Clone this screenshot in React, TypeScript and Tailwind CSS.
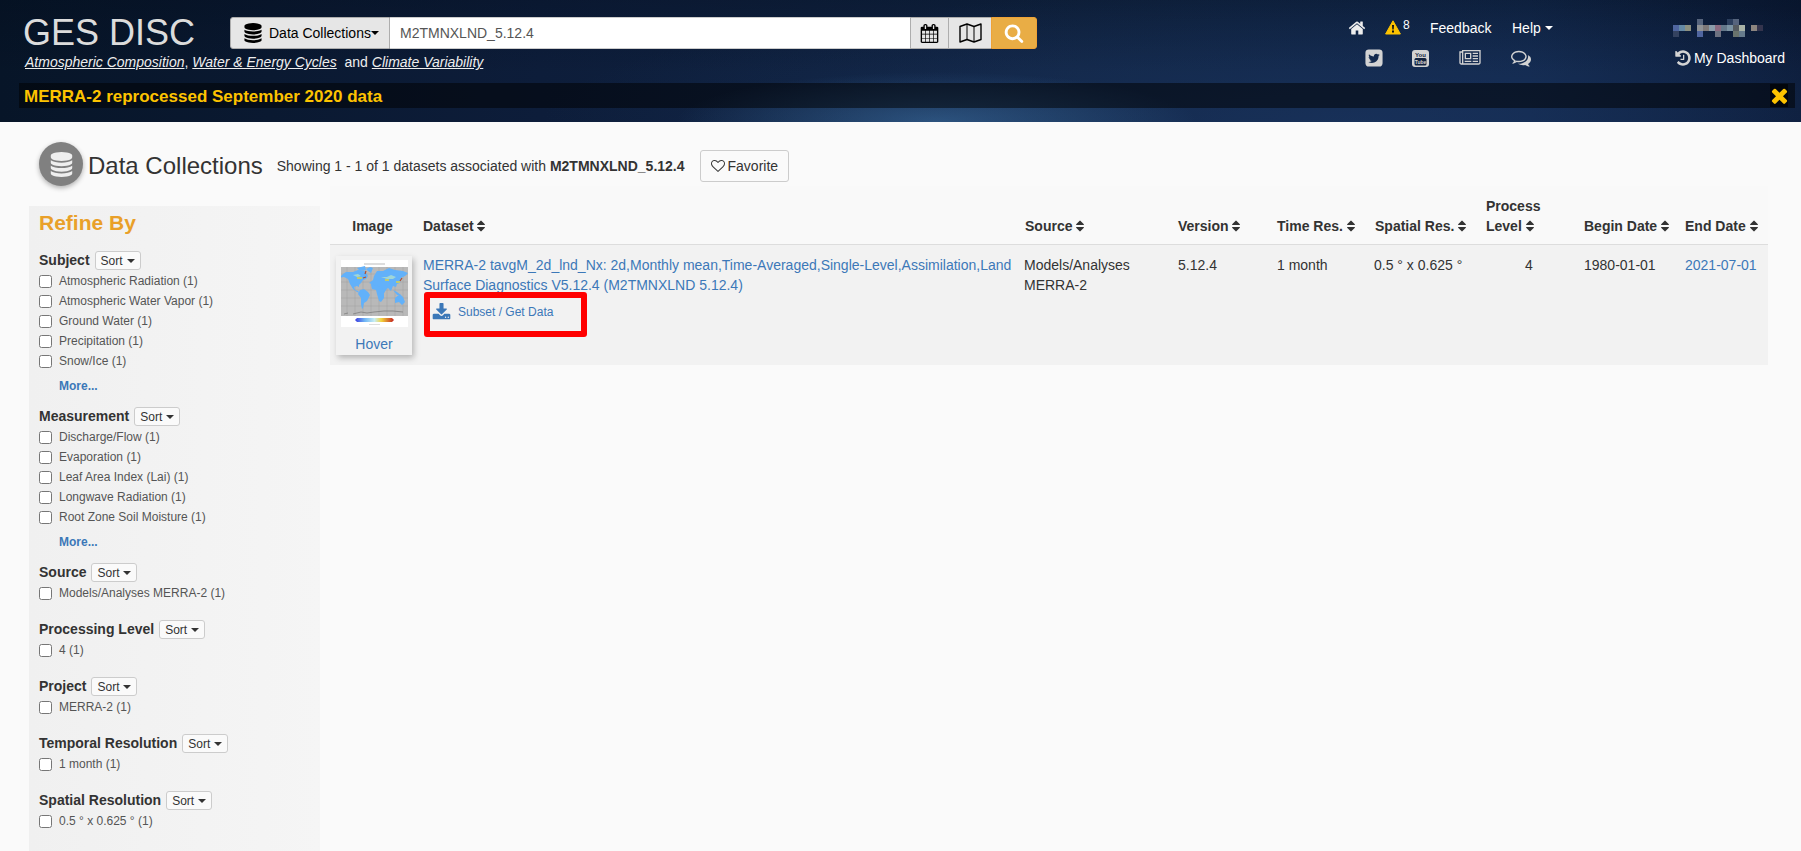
import { useState } from 'react'
import type { ReactNode } from 'react'

const icons = {
  database:
    'M896 768q237 0 443-43t325-127v170q0 69-103 128t-280 93.5-385 34.5-385-34.5-280-93.5-103-128v-170q119 84 325 127t443 43zm0 768q237 0 443-43t325-127v170q0 69-103 128t-280 93.5-385 34.5-385-34.5-280-93.5-103-128v-170q119 84 325 127t443 43zm0-384q237 0 443-43t325-127v170q0 69-103 128t-280 93.5-385 34.5-385-34.5-280-93.5-103-128v-170q119 84 325 127t443 43zm0-1152q208 0 385 34.5t280 93.5 103 128v128q0 69-103 128t-280 93.5-385 34.5-385-34.5-280-93.5-103-128v-128q0-69 103-128t280-93.5 385-34.5z',
  home: 'M1472 992v480q0 26-19 45t-45 19h-384v-384h-256v384h-384q-26 0-45-19t-19-45v-480q0-1 .5-3t.5-3l575-474 575 474q1 2 1 6zm223-69l-62 74q-8 9-21 11h-3q-13 0-21-7l-692-577-692 577q-12 8-24 7-13-2-21-11l-62-74q-8-10-7-23.5t11-21.5l719-599q32-26 76-26t76 26l244 204v-195q0-14 9-23t23-9h192q14 0 23 9t9 23v408l219 182q10 8 11 21.5t-7 23.5z',
  search:
    'M1216 832q0-185-131.5-316.5t-316.5-131.5-316.5 131.5-131.5 316.5 131.5 316.5 316.5 131.5 316.5-131.5 131.5-316.5zm512 832q0 52-38 90t-90 38q-54 0-90-38l-343-342q-179 124-399 124-143 0-273.5-55.5t-225-150-150-225-55.5-273.5 55.5-273.5 150-225 225-150 273.5-55.5 273.5 55.5 225 150 150 225 55.5 273.5q0 220-124 399l343 343q37 37 37 90z',
  calendar:
    'M192 1664h288v-288h-288v288zm352 0h320v-288h-320v288zm-352-352h288v-320h-288v320zm352 0h320v-320h-320v320zm-352-384h288v-288h-288v288zm736 736h320v-288h-320v288zm-384-736h320v-288h-320v288zm768 736h288v-288h-288v288zm-384-352h320v-320h-320v320zm-352-864v-288q0-13-9.5-22.5t-22.5-9.5h-64q-13 0-22.5 9.5t-9.5 22.5v288q0 13 9.5 22.5t22.5 9.5h64q13 0 22.5-9.5t9.5-22.5zm736 864h288v-320h-288v320zm-384-384h320v-288h-320v288zm384 0h288v-288h-288v288zm32-480v-288q0-13-9.5-22.5t-22.5-9.5h-64q-13 0-22.5 9.5t-9.5 22.5v288q0 13 9.5 22.5t22.5 9.5h64q13 0 22.5-9.5t9.5-22.5zm384-64v1280q0 52-38 90t-90 38h-1408q-52 0-90-38t-38-90v-1280q0-52 38-90t90-38h128v-96q0-66 47-113t113-47h64q66 0 113 47t47 113v96h384v-96q0-66 47-113t113-47h64q66 0 113 47t47 113v96h128q52 0 90 38t38 90z',
  comments:
    'M704 384q-153 0-286 52t-211.5 141-78.5 191q0 82 53 158t149 132l97 56-35 84q34-20 62-39l44-31 53 10q78 14 153 14 153 0 286-52t211.5-141 78.5-191-78.5-191-211.5-141-286-52zm0-128q191 0 353.5 68.5t256.5 186.5 94 257-94 257-256.5 186.5-353.5 68.5q-86 0-176-16-124 88-278 128-36 9-86 16h-3q-11 0-20.5-8t-11.5-21q-1-3-1-6.5t.5-6.5 2-6l2.5-5 3.5-5.5 4-5 4.5-5 4-4.5q5-6 23-25t26-29.5 22.5-29 25-38.5 20.5-44q-124-72-195-177t-71-224q0-139 94-257t256.5-186.5 353.5-68.5zm822 1169q10 24 20.5 44t25 38.5 22.5 29 26 29.5 23 25q1 1 4 4.5t4.5 5 4 5 3.5 5.5l2.5 5 2 6 .5 6.5-1 6.5q-3 14-13 22t-22 7q-50-7-86-16-154-40-278-128-90 16-176 16-271 0-472-132 58 4 88 4 161 0 309-45t264-129q125-92 192-212t67-254q0-77-23-152 129 71 204 178t75 230q0 120-71 224.5t-195 176.5z',
  history:
    'M1664 896q0 156-61 298t-164 245-245 164-298 61q-172 0-327-72.5t-264-204.5q-7-10-6.5-22.5t8.5-20.5l137-138q10-9 25-9 16 2 23 12 73 95 179 147t225 52q104 0 198.5-40.5t163.5-109.5 109.5-163.5 40.5-198.5-40.5-198.5-109.5-163.5-163.5-109.5-198.5-40.5q-98 0-188 35.5t-160 101.5l137 138q31 30 14 69-17 40-59 40h-448q-26 0-45-19t-19-45v-448q0-42 40-59 39-17 69 14l130 129q107-101 244.5-156.5t284.5-55.5q156 0 298 61t245 164 164 245 61 298zm-640-288v448q0 14-9 23t-23 9h-320q-14 0-23-9t-9-23v-64q0-14 9-23t23-9h224v-352q0-14 9-23t23-9h64q14 0 23 9t9 23z',
  twitter:
    'M1408 610q-56 25-121 34 68-40 93-117-65 38-134 51-61-66-153-66-87 0-148.5 61.5t-61.5 148.5q0 29 5 48-129-7-242-65t-192-155q-29 50-29 106 0 114 91 175-47-1-100-26v2q0 75 50 133.5t123 72.5q-29 8-51 8-13 0-39-4 21 63 74.5 104t121.5 42q-116 90-261 90-26 0-50-3 148 94 322 94 112 0 210-35.5t168-95 120.5-137 75-162 24.5-168.5q0-18-1-27 63-45 105-109zm256-194v960q0 119-84.5 203.5t-203.5 84.5h-960q-119 0-203.5-84.5t-84.5-203.5v-960q0-119 84.5-203.5t203.5-84.5h960q119 0 203.5 84.5t84.5 203.5z',
  heart:
    'M1664 596q0-81-21.5-143t-55-98.5-81.5-59.5-94-31-98-8-112 25.5-110.5 64-86.5 72-60 61.5q-18 22-49 22t-49-22q-24-28-60-61.5t-86.5-72-110.5-64-112-25.5-98 8-94 31-81.5 59.5-55 98.5-21.5 143q0 168 187 355l581 560 580-559q188-188 188-356zm128 0q0 221-229 450l-623 600q-18 18-44 18t-44-18l-624-602q-10-8-27.5-26t-55.5-65.5-68-97.5-53.5-121-23.5-138q0-220 127-344t351-124q62 0 126.5 21.5t120 58 95.5 68.5 76 68q36-36 76-68t95.5-68.5 120-58 126.5-21.5q224 0 351 124t127 344z',
  download:
    'M1344 1344q0-26-19-45t-45-19-45 19-19 45 19 45 45 19 45-19 19-45zm256 0q0-26-19-45t-45-19-45 19-19 45 19 45 45 19 45-19 19-45zm128-224v320q0 40-28 68t-68 28h-1472q-40 0-68-28t-28-68v-320q0-40 28-68t68-28h465l135 136q58 56 136 56t136-56l136-136h464q40 0 68 28t28 68zm-325-569q17 41-14 70l-448 448q-18 19-45 19t-45-19l-448-448q-31-29-14-70 17-39 59-39h256v-448q0-26 19-45t45-19h256q26 0 45 19t19 45v448h256q42 0 59 39z',
  sort: 'M1408 1088q0 26-19 45l-448 448q-19 19-45 19t-45-19l-448-448q-19-19-19-45t19-45 45-19h896q26 0 45 19t19 45zm0-384q0 26-19 45t-45 19h-896q-26 0-45-19t-19-45 19-45l448-448q19-19 45-19t45 19l448 448q19 19 19 45z',
  times:
    'M1490 1322q0 40-28 68l-136 136q-28 28-68 28t-68-28l-294-294-294 294q-28 28-68 28t-68-28l-136-136q-28-28-28-68t28-68l294-294-294-294q-28-28-28-68t28-68l136-136q28-28 68-28t68 28l294 294 294-294q28-28 68-28t68 28l136 136q28 28 28 68t-28 68l-294 294 294 294q28 28 28 68z',
}

function Icon({ name, className }: { name: keyof typeof icons; className: string }) {
  return (
    <svg viewBox="0 0 1792 1792" fill="currentColor" className={`shrink-0 ${className}`} aria-hidden="true">
      <path d={icons[name]} />
    </svg>
  )
}

function Caret() {
  return <span className="inline-block border-x-4 border-t-4 border-x-transparent border-t-current" />
}

function MapIcon() {
  return (
    <svg viewBox="0 0 23 20" className="w-[23px] h-5" fill="none" stroke="currentColor" aria-hidden="true">
      <path d="M1 3.5 8 1l7 2.5L22 1v15.500l-7 2.500-7-2.500-7 2.500z" strokeWidth="1.400" strokeLinejoin="round" />
      <path d="M8 1v15.500M15 3.500v15.500" strokeWidth="1" />
    </svg>
  )
}

function WarningIcon() {
  return (
    <svg viewBox="0 0 16 15" className="w-4 h-[15px]" aria-hidden="true">
      <path d="M8 .8 15.400 14H.600z" fill="#fdc300" stroke="#fdc300" strokeWidth="1" strokeLinejoin="round" />
      <path d="M7 5h2l-.3 4.500H7.300zM7 10.500h2v2H7z" fill="#111" />
    </svg>
  )
}

function YoutubeIcon() {
  return (
    <svg viewBox="0 0 17 17" className="w-[17px] h-[17px]" aria-hidden="true">
      <rect width="17" height="17" rx="3" fill="#d3d3d3" />
      <rect x="2.500" y="8" width="12" height="7.500" rx="1.500" fill="#13233f" />
      <text x="8.500" y="6.800" textAnchor="middle" fontSize="6" fontWeight="700" fill="#13233f">You</text>
      <text x="8.500" y="13.900" textAnchor="middle" fontSize="5" fontWeight="700" fill="#d3d3d3">Tube</text>
    </svg>
  )
}

function NewspaperIcon() {
  return (
    <svg viewBox="0 0 2048 1536" fill="currentColor" className="w-[22px] h-4" aria-hidden="true">
      <path d="M1024 384h-384v384h384v-384zm128 640v128h-640v-128h640zm0-768v640h-640v-640h640zm640 768v128h-512v-128h512zm0-256v128h-512v-128h512zm0-256v128h-512v-128h512zm0-256v128h-512v-128h512zm-1536 960v-960h-128v960q0 26 19 45t45 19 45-19 19-45zm1664 0v-1088h-1536v1088q0 33-11 64h1483q26 0 45-19t19-45zm128-1216v1216q0 80-56 136t-136 56h-1664q-80 0-136-56t-56-136v-1088h256v-128h1792z" />
    </svg>
  )
}

// Masked user name: [column, row, color] in 6px blocks
const userBlocks: [number, number, string][] = [
  [4, 0, '#56647d'], [9, 0, '#2c3f5e'], [10, 0, '#56647d'],
  [0, 1, '#4f659f'], [1, 1, '#6489a5'], [2, 1, '#8c9080'], [4, 1, '#8f9296'], [5, 1, '#7d7878'],
  [6, 1, '#8a9caa'], [7, 1, '#8a6a80'], [8, 1, '#64788a'], [9, 1, '#7b93a3'], [10, 1, '#555b60'],
  [11, 1, '#a8b2a6'], [13, 1, '#8c8580'], [14, 1, '#34344d'],
  [0, 2, '#34425f'], [4, 2, '#4f659f'], [7, 2, '#6c7180'], [10, 2, '#69736d'], [11, 2, '#667b8c'],
]

function UserName() {
  return (
    <svg viewBox="0 0 90 18" className="w-[90px] h-[18px]" shapeRendering="crispEdges" aria-hidden="true">
      {userBlocks.map(([x, y, fill]) => (
        <rect key={`${x}-${y}`} x={x * 6} y={y * 6} width="6" height="6" fill={fill} />
      ))}
    </svg>
  )
}

function Thumbnail() {
  return (
    <svg viewBox="0 0 67 67" className="w-[67px] h-[67px]" aria-hidden="true">
      <defs>
        <linearGradient id="scale">
          <stop offset="0" stopColor="#3a3ae0" />
          <stop offset=".25" stopColor="#6fb6f5" />
          <stop offset=".5" stopColor="#c9eef2" />
          <stop offset=".68" stopColor="#f3d33c" />
          <stop offset="1" stopColor="#c22020" />
        </linearGradient>
      </defs>
      <rect width="67" height="67" fill="#fff" />
      <rect x="23" y="3" width="21" height="2" fill="#ddd" />
      <rect x="0" y="7" width="67" height="49" fill="#b9b9b9" />
      <path d="M0 14h67M0 22h67M0 30h67M0 38h67M0 46h67M6 7v49M14 7v49M22 7v49M30 7v49M38 7v49M46 7v49M54 7v49M62 7v49" stroke="#a6a6a6" strokeWidth=".6" />
      <g fill="#62b1fa">
        <path d="M2 14l3-2 7 0 5-2 7 1 3 5-2 3-3 1-2 3-2 2 0 2-2-1-3 1 1 3 3 1 2 2-3-1-4-3-3-5-2-5-4-2-5 1z" />
        <path d="M16 8l8-2 1 4-6 1zM25 9l4-2 3 1-2 5-3-2z" />
        <path d="M19 30l4-1 4 3 2 3-3 6-3 2-1 5-1 1-1-5 0-6-3-4z" />
        <path d="M31 22l6-2 6 2 2 5 2 0-4 6 0 5-3 4-2-1-2-7-1-4-4-1-1-4z" />
        <path d="M32 20l1-4 3-5 6 0 6-3 6 2 8 1 5 2-3 3-4 2-1 5-3 1-1 3-3-1-2 5-3-3-2 1-2 4-2-5-4-2-4-1-5-2z" />
        <path d="M52 30l4 2 4 3-4 0zM54 38l5-4 3 3 2 5-3 3-3-3-4 1z" />
      </g>
      <path d="M12 15l5-1 3 2-4 1zM40 17l6 0 4-2 5 2-3 2-6 0z" fill="#9fd6d8" />
      <path d="M16 18h5M44 20h4M55 22h4" stroke="#e2d23f" strokeWidth="1.500" />
      <path d="M24 14l1-3M22 18l3-1M59 21l2-3" stroke="#b34b2a" strokeWidth="1.200" />
      <path d="M3 54l4-1M12 54l8-2 6 1 7-1 10-1 9 0 10 1" stroke="#777" strokeWidth=".7" fill="none" />
      <path d="M14 60l2-2h35l2 2-2 2H16z" fill="url(#scale)" />
      <rect x="28" y="64" width="11" height="1" fill="#ddd" />
    </svg>
  )
}

const facets = [
  {
    title: 'Subject',
    items: ['Atmospheric Radiation (1)', 'Atmospheric Water Vapor (1)', 'Ground Water (1)', 'Precipitation (1)', 'Snow/Ice (1)'],
    more: true,
  },
  {
    title: 'Measurement',
    items: ['Discharge/Flow (1)', 'Evaporation (1)', 'Leaf Area Index (Lai) (1)', 'Longwave Radiation (1)', 'Root Zone Soil Moisture (1)'],
    more: true,
  },
  { title: 'Source', items: ['Models/Analyses MERRA-2 (1)'] },
  { title: 'Processing Level', items: ['4 (1)'] },
  { title: 'Project', items: ['MERRA-2 (1)'] },
  { title: 'Temporal Resolution', items: ['1 month (1)'] },
  { title: 'Spatial Resolution', items: ['0.5 ° x 0.625 ° (1)'] },
]

function Header() {
  const [query, setQuery] = useState('M2TMNXLND_5.12.4')
  const [notice, setNotice] = useState(true)

  return (
    <header className="pt-[13px] pb-[14px] text-white bg-[radial-gradient(ellipse_260px_50px_at_52%_100%,rgba(60,110,160,0.6),transparent),radial-gradient(ellipse_45%_110%_at_75%_100%,rgba(30,58,105,0.5),transparent),linear-gradient(rgba(0,8,20,0.25),transparent_60%),linear-gradient(90deg,#071528_0%,#0d1d3a_30%,#112544_60%,#11274a_85%,#0b1a36_100%)]">
      <div className="flex justify-between pr-4 pl-[23px]">
        <div className="flex-1">
          <div className="flex items-center h-10">
            <h1 className="w-[207px] text-4xl leading-10 text-[#dcdcdc]">GES DISC</h1>
            <form className="flex flex-1 max-w-[807px] h-8" onSubmit={(e) => e.preventDefault()}>
              <button type="button" className="flex items-center w-40 pl-3 rounded-l-[3px] border border-[#adadad] bg-[#e6e6e6] text-black">
                <Icon name="database" className="w-5 h-5" />
                <span className="ml-[6px]">Data Collections</span>
                <Caret />
              </button>
              <input
                aria-label="Search"
                className="flex-1 min-w-0 px-[10px] border-y border-[#ccc] bg-white text-[#555] outline-none"
                value={query}
                onChange={(e) => setQuery(e.target.value)}
              />
              <button type="button" aria-label="Date range" className="flex items-center justify-center w-[39px] border border-[#adadad] bg-[#e6e6e6] text-black">
                <Icon name="calendar" className="w-[19px] h-[19px]" />
              </button>
              <button type="button" aria-label="Spatial region" className="flex items-center justify-center w-[42px] border-y border-[#adadad] bg-[#e6e6e6] text-black">
                <MapIcon />
              </button>
              <button type="submit" aria-label="Search datasets" className="flex items-center justify-center w-[46px] rounded-r-[3px] border border-[#eea236] bg-[#e9ad45]">
                <Icon name="search" className="w-5 h-5" />
              </button>
            </form>
          </div>
          <p className="pl-[2px] leading-[18px] text-[#eee]">
            <a href="#atmosphere" className="italic underline">Atmospheric Composition</a>,{' '}
            <a href="#water" className="italic underline">Water &amp; Energy Cycles</a>&nbsp; and{' '}
            <a href="#climate" className="italic underline">Climate Variability</a>
          </p>
        </div>
        <nav className="flex gap-[120px]">
          <div className="w-[205px]">
            <div className="flex items-center h-[30px]">
              <a href="#home" aria-label="Home" className="w-[37px] text-[#eee]">
                <Icon name="home" className="w-[18px] h-[18px]" />
              </a>
              <a href="#alerts" className="flex items-center w-[45px] pb-[2px]">
                <WarningIcon />
                <span className="pb-1 pl-[2px] text-xs">8</span>
              </a>
              <a href="#feedback" className="w-[82px]">Feedback</a>
              <button type="button" className="flex items-center gap-1">
                Help
                <Caret />
              </button>
            </div>
            <div className="flex items-center h-[30px] pl-4 text-[#d3d3d3]">
              <a href="#twitter" aria-label="Twitter" className="w-[48px]">
                <Icon name="twitter" className="w-5 h-5" />
              </a>
              <a href="#youtube" aria-label="YouTube" className="w-[47px]">
                <YoutubeIcon />
              </a>
              <a href="#news" aria-label="News" className="w-[52px]">
                <NewspaperIcon />
              </a>
              <a href="#forum" aria-label="Forum">
                <Icon name="comments" className="w-5 h-5" />
              </a>
            </div>
          </div>
          <div className="w-28">
            <div className="flex items-center h-[30px]">
              <UserName />
            </div>
            <a href="#dashboard" className="flex items-center justify-end gap-[2px] h-[30px] whitespace-nowrap">
              <Icon name="history" className="w-[18px] h-[18px] text-[#d3d3d3]" />
              My Dashboard
            </a>
          </div>
        </nav>
      </div>
      {notice && (
        <div className="flex items-center justify-between h-[25px] mt-[10px] mr-[6px] ml-[19px] pr-[7px] pl-[5px] bg-black/50 text-[#fdc300]">
          <strong className="pt-[2px] text-[17px]">MERRA-2 reprocessed September 2020 data</strong>
          <button type="button" aria-label="Dismiss" className="flex items-center justify-center w-[18px] h-[23px] bg-black/60" onClick={() => setNotice(false)}>
            <Icon name="times" className="w-[23px] h-[23px]" />
          </button>
        </div>
      )}
    </header>
  )
}

function Sidebar() {
  return (
    <aside className="w-[291px] shrink-0 mt-5 pt-[3px] pl-[10px] bg-linear-to-r from-[#f0f0f0] to-[#f5f5f5]">
      <h3 className="mb-[14px] text-[21px] leading-7 font-bold text-[#e9a029]">Refine By</h3>
      {facets.map((facet) => (
        <fieldset key={facet.title} className={facet.more ? 'mb-[11px]' : 'mb-[17px]'}>
          <div className="flex items-start gap-[5px] h-5">
            <h4 className="leading-[18px] font-bold">{facet.title}</h4>
            <button type="button" aria-label={`Sort ${facet.title}`} className="flex items-center gap-1 h-[19px] px-[5px] rounded-[3px] border border-[#ccc] bg-[#fafafa] text-xs">
              Sort
              <Caret />
            </button>
          </div>
          {facet.items.map((item) => (
            <label key={item} className="flex items-center gap-[7px] text-xs leading-5 text-[#555]">
              <input type="checkbox" className="w-[13px] h-[13px]" />
              {item}
            </label>
          ))}
          {facet.more && (
            <a href={`#${facet.title}`} className="block mt-[5px] pl-5 text-xs leading-5 font-bold text-[#3c78b8]">More...</a>
          )}
        </fieldset>
      ))}
    </aside>
  )
}

function SortHead({ children, className }: { children: ReactNode; className?: string }) {
  return (
    <th className={`px-2 pt-[10px] pb-2 align-bottom text-left font-bold ${className ?? ''}`}>
      {children} <Icon name="sort" className="inline -mt-[2px] -ml-[3px] w-[14px] h-[14px]" />
    </th>
  )
}

function Results() {
  return (
    <div className="flex-1 ml-[10px]">
      <table className="w-full table-fixed border-collapse">
        <thead className="bg-[#f9f9f9]">
          <tr className="border-b border-[#ddd]">
            <th className="w-[85px] p-2 align-bottom text-center font-bold">Image</th>
            <SortHead>Dataset</SortHead>
            <SortHead className="w-[153px]">Source</SortHead>
            <SortHead className="w-[99px]">Version</SortHead>
            <SortHead className="w-[98px] whitespace-nowrap">Time Res.</SortHead>
            <SortHead className="w-[111px] whitespace-nowrap">Spatial Res.</SortHead>
            <SortHead className="w-[98px]">Process<br />Level</SortHead>
            <SortHead className="w-[101px] whitespace-nowrap">Begin Date</SortHead>
            <SortHead className="w-[91px] whitespace-nowrap">End Date</SortHead>
          </tr>
        </thead>
        <tbody>
          <tr className="bg-[#f2f2f2] align-top">
            <td className="pt-[11px] pb-[10px] pl-[6px]">
              <a href="#preview" className="flex flex-col items-center w-[76px] h-[99px] pt-1 bg-[#f2f2f2] text-[#3c78b8] shadow-[2px_3px_6px_rgba(0,0,0,0.25)]">
                <Thumbnail />
                <span className="mt-[7px]">Hover</span>
              </a>
            </td>
            <td className="pt-[10px] pl-2">
              <a href="#dataset" className="text-[#3c78b8]">
                MERRA-2 tavgM_2d_lnd_Nx: 2d,Monthly mean,Time-Averaged,Single-Level,Assimilation,Land Surface Diagnostics V5.12.4 (M2TMNXLND 5.12.4)
              </a>
              <div className="relative h-10 pt-[7px] pl-[9px]">
                <a href="#subset" className="flex items-center gap-[7px] text-xs leading-5 text-[#3c78b8]">
                  <Icon name="download" className="w-[19px] h-[19px]" />
                  Subset / Get Data
                </a>
                <div className="absolute -top-[3px] left-px w-[163px] h-[45px] rounded-[3px] border-6 border-[#ff0000] pointer-events-none" />
              </div>
            </td>
            <td className="pt-[10px] pl-[7px]">Models/Analyses<br />MERRA-2</td>
            <td className="pt-[10px] px-2">5.12.4</td>
            <td className="pt-[10px] px-2">1 month</td>
            <td className="pt-[10px] pl-[7px] whitespace-nowrap">0.5 ° x 0.625 °</td>
            <td className="pt-[10px] pr-2 pl-3 text-center">4</td>
            <td className="pt-[10px] px-2">1980-01-01</td>
            <td className="pt-[10px] px-2">
              <a href="#end" className="text-[#3c78b8]">2021-07-01</a>
            </td>
          </tr>
        </tbody>
      </table>
    </div>
  )
}

export default function App() {
  return (
    <div className="flex flex-col min-h-screen bg-[#fafafa] font-['Liberation_Sans',Arial,sans-serif] text-sm leading-5 text-[#333]">
      <Header />
      <main className="flex flex-col flex-1 pt-5">
        <div className="flex items-center h-11 pl-[39px]">
          <span className="flex items-center justify-center w-11 h-11 rounded-full bg-[#808080] text-[#eee] shadow-[0_2px_5px_rgba(0,0,0,0.3)]">
            <Icon name="database" className="w-[25px] h-[25px]" />
          </span>
          <div className="flex items-center pt-1">
            <h2 className="ml-[5px] text-2xl leading-8">Data Collections</h2>
            <p className="ml-[14px]">
              Showing 1 - 1 of 1 datasets associated with <strong>M2TMNXLND_5.12.4</strong>
            </p>
            <button type="button" className="flex items-center gap-[3px] h-8 ml-[15px] px-[10px] rounded-[3px] border border-[#ccc]">
              <Icon name="heart" className="w-[14px] h-[14px]" />
              Favorite
            </button>
          </div>
        </div>
        <div className="flex flex-1 pr-[33px] pl-[29px]">
          <Sidebar />
          <Results />
        </div>
      </main>
    </div>
  )
}
